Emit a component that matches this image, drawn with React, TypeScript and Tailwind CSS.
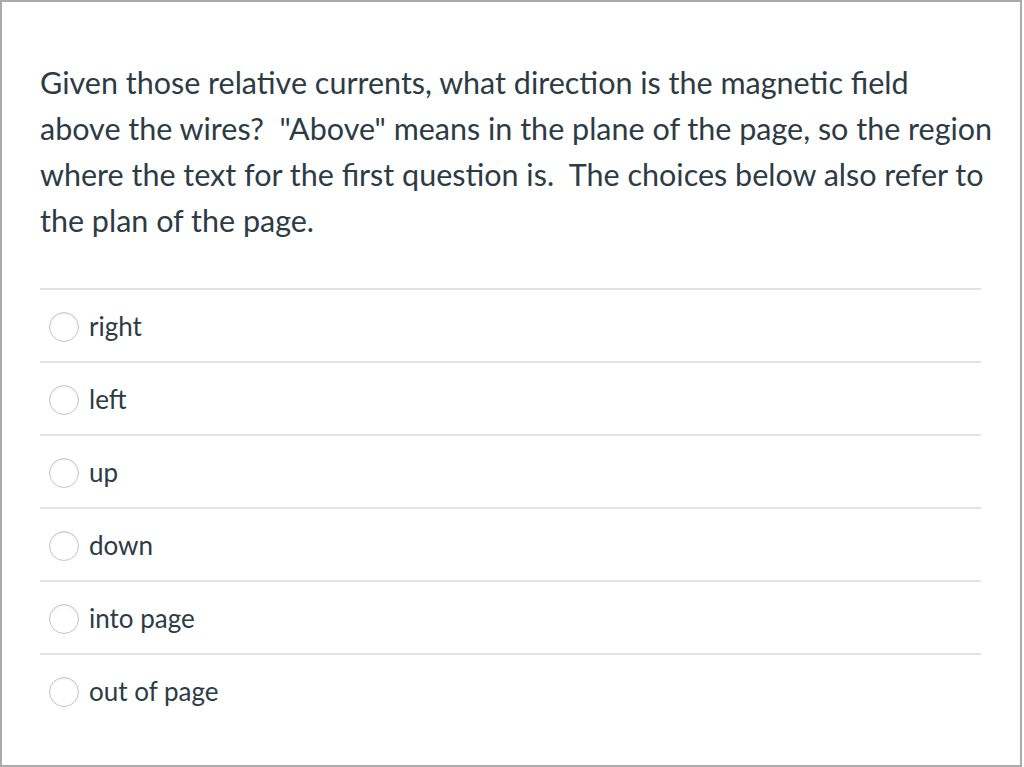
import React from "react";

const options = ["right", "left", "up", "down", "into page", "out of page"];

export default function App() {
  return (
    <div className="w-[1022px] h-[767px] border-2 border-[#ababab] bg-white text-[#2d3b45]" style={{ fontFamily: "Lato, 'Open Sans', sans-serif" }}>
      <div className="pl-[38px] pr-[39px] pt-[57px]">
        <p className="text-[30.5px] leading-[46px] whitespace-nowrap">
          Given those relative currents, what direction is the magnetic field
          <br />
          above the wires?&nbsp; "Above" means in the plane of the page, so the region
          <br />
          where the text for the first question is.&nbsp; The choices below also refer to
          <br />
          the plan of the page.
        </p>
        <div className="mt-[45px]">
          {options.map((o) => (
            <div key={o} className="flex items-center h-[73px] border-t-2 border-[#e2e2e2]">
              <div className="ml-[9px] w-[30px] h-[30px] rounded-full border-[1.5px] border-[#c4c4c4] shadow-[inset_0_1px_2px_rgba(0,0,0,0.08)] mt-[2px]" />
              <span className="ml-[10px] text-[26px] leading-[30px]">{o}</span>
            </div>
          ))}
        </div>
      </div>
    </div>
  );
}
